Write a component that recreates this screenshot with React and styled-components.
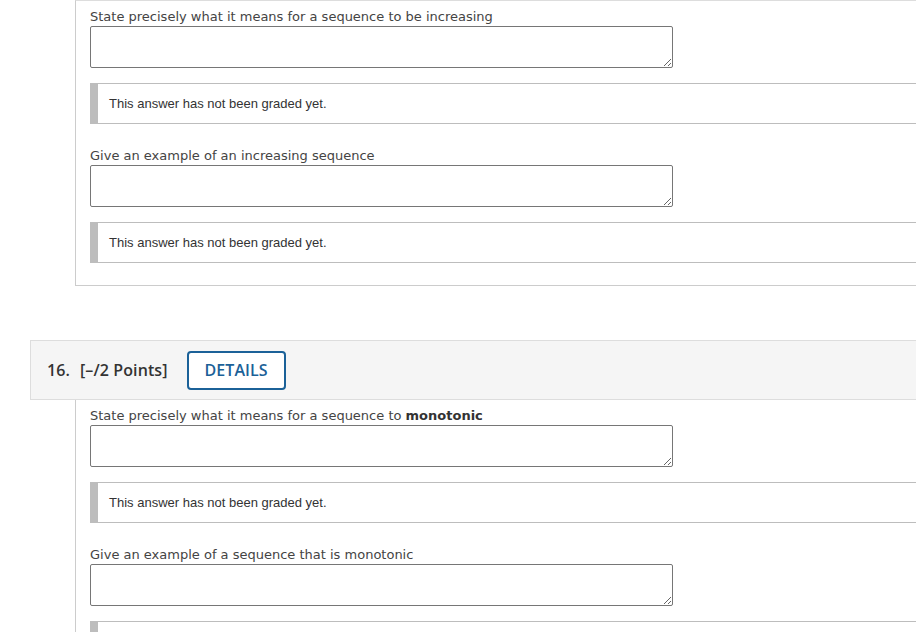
import React from "react";
import styled, { createGlobalStyle } from "styled-components";

const Global = createGlobalStyle`
  html, body { margin: 0; padding: 0; background: #fff; overflow: hidden; }
  body { width: 916px; height: 632px; }
`;

const Page = styled.div`
  display: flex;
  flex-direction: column;
  width: 916px;
`;

const Panel = styled.div`
  margin-left: 75px;
  border-left: 1px solid #cccccc;
  border-top: ${(p) => (p.$top ? "1px solid #dddddd" : "none")};
  border-bottom: ${(p) => (p.$bottom ? "1px solid #cccccc" : "none")};
  padding: 8px 0 ${(p) => (p.$bottom ? "22px" : "0")} 14px;
  display: flex;
  flex-direction: column;
`;

const Part = styled.div`
  display: flex;
  flex-direction: column;
  & + & { margin-top: 24px; }
`;

const Label = styled.div`
  font-family: "DejaVu Sans", Verdana, sans-serif;
  font-size: 13px;
  line-height: 16px;
  color: #444;
  margin-bottom: 1px;
  white-space: nowrap;
  b { color: #333; }
`;

const Answer = styled.textarea`
  box-sizing: border-box;
  width: 583px;
  height: 42px;
  margin: 0;
  border: 1px solid #767676;
  border-radius: 2px;
  background: #fff;
  resize: both;
`;

const Graded = styled.div`
  box-sizing: border-box;
  margin-top: 15px;
  height: 41px;
  border-top: 1px solid #bdbdbd;
  border-bottom: 1px solid #bdbdbd;
  border-left: 8px solid #bdbdbd;
  padding-left: 11px;
  display: flex;
  align-items: center;
  font-family: "Liberation Sans", Arial, sans-serif;
  font-size: 13px;
  color: #333;
`;

const Spacer = styled.div`
  height: 54px;
`;

const Header = styled.div`
  box-sizing: border-box;
  margin-left: 30px;
  height: 60px;
  background: #f5f5f5;
  border: 1px solid #dddddd;
  border-right: none;
  display: flex;
  align-items: center;
  padding-left: 16px;
  font-family: "Open Sans", sans-serif;
  font-weight: 600;
  font-size: 16px;
  letter-spacing: 0.1px;
  color: #333;
`;

const Num = styled.span`
  margin-right: 10px;
`;

const Points = styled.span`
  margin-right: 19px;
`;

const DetailsButton = styled.button`
  box-sizing: border-box;
  width: 99px;
  height: 39px;
  border: 2px solid #1b6198;
  border-radius: 4px;
  background: #fff;
  color: #1b6198;
  font-family: "Open Sans", sans-serif;
  font-weight: 600;
  font-size: 16px;
  padding: 0;
  letter-spacing: 0.1px;
`;

function Question({ label }) {
  return (
    <Part>
      <Label>{label}</Label>
      <Answer />
      <Graded>This answer has not been graded yet.</Graded>
    </Part>
  );
}

export default function App() {
  return (
    <Page>
      <Global />
      <Panel $top $bottom>
        <Question label="State precisely what it means for a sequence to be increasing" />
        <Question label="Give an example of an increasing sequence" />
      </Panel>
      <Spacer />
      <Header>
        <Num>16.</Num>
        <Points>[–/2 Points]</Points>
        <DetailsButton>DETAILS</DetailsButton>
      </Header>
      <Panel>
        <Question
          label={
            <>
              State precisely what it means for a sequence to <b>monotonic</b>
            </>
          }
        />
        <Question label="Give an example of a sequence that is monotonic" />
      </Panel>
    </Page>
  );
}
